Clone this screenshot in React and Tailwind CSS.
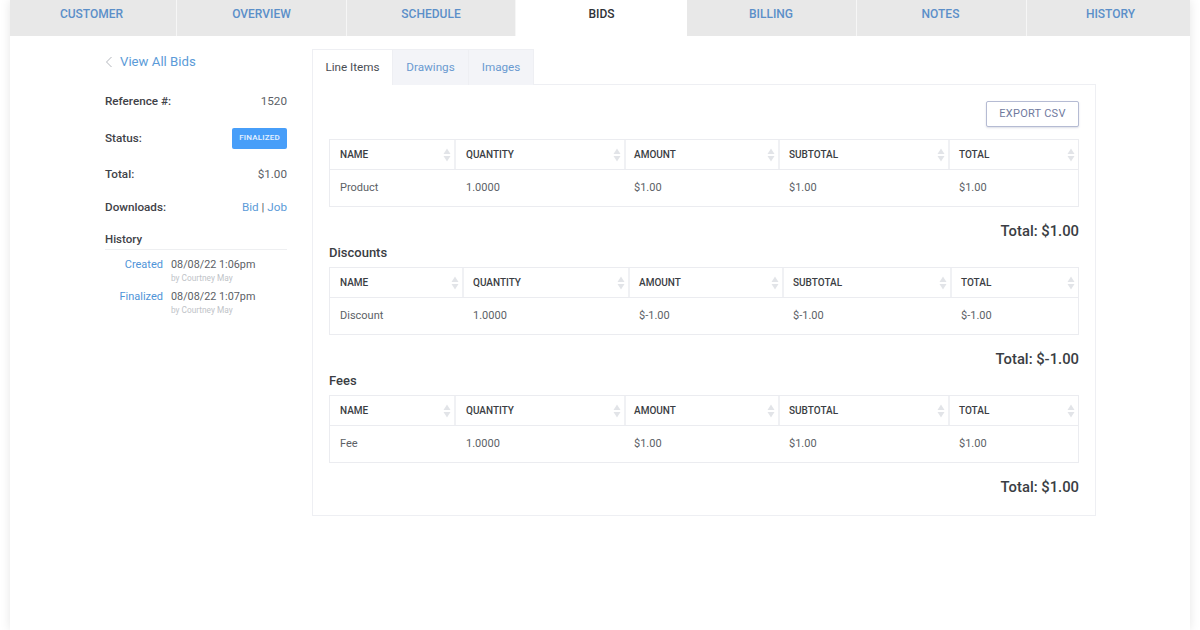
import React from 'react';

const topTabs = [
  { label: 'CUSTOMER', width: 'w-[167px]', extra: 'pr-[3px]' },
  { label: 'OVERVIEW', width: 'w-[170px]' },
  { label: 'SCHEDULE', width: 'w-[169px]' },
  { label: 'BIDS', width: 'w-[171px]', active: true },
  { label: 'BILLING', width: 'w-[170px]', extra: 'pr-[1px]' },
  { label: 'NOTES', width: 'w-[170px]', extra: 'pr-[2px]' },
  { label: 'HISTORY', width: 'w-[163px]', extra: 'pl-[4px]' },
];

const columns = ['NAME', 'QUANTITY', 'AMOUNT', 'SUBTOTAL', 'TOTAL'];

const wideCols = 'grid-cols-[126px_170px_154px_170px_1fr]';
const widePads = ['pl-[10px]', 'pl-[10px]', 'pl-[8px]', 'pl-[9px]', 'pl-[9px]'];
const discountCols = 'grid-cols-[134px_166px_154px_168px_1fr]';
const discountPads = ['pl-[10px]', 'pl-[9px]', 'pl-[9px]', 'pl-[9px]', 'pl-[9px]'];

const SortArrows = () => (
  <svg width="8" height="14" viewBox="0 0 8 14" className="absolute right-[3px] top-[8px]">
    <path d="M4 0.5 L7.5 6 L0.5 6 Z" fill="#e2e4e8" />
    <path d="M4 13.5 L7.5 8 L0.5 8 Z" fill="#e2e4e8" />
  </svg>
);

const ItemTable = ({ cols, pads, row }) => (
  <div className="border border-[#ebecf0]">
    <div className={`grid ${cols} h-[30px] border-b border-[#ebecf0]`}>
      {columns.map((col, i) => (
        <div
          key={col}
          className={`relative flex items-center text-[10px] font-medium text-[#3a3d43] ${pads[i]} ${i < 4 ? 'border-r-2 border-[#f0f1f4]' : ''}`}
        >
          {col}
          <SortArrows />
        </div>
      ))}
    </div>
    <div className={`grid ${cols} h-[36px]`}>
      {row.map((val, i) => (
        <div key={i} className={`flex items-center text-[11px] text-[#5c5f66] ${pads[i]}`}>
          {val}
        </div>
      ))}
    </div>
  </div>
);

const TotalLine = ({ children, className }) => (
  <div className={`text-right text-[14.8px] leading-[20px] font-medium text-[#3a3d43] ${className}`}>{children}</div>
);

const InfoRow = ({ label, children, className }) => (
  <div className={`flex items-center justify-between h-[20px] text-[11.7px] ${className}`}>
    <span className="font-medium text-[#3f4248]">{label}</span>
    {children}
  </div>
);

const HistoryItem = ({ action, date, className }) => (
  <div className={`flex ${className}`}>
    <div className="w-[58px] text-right text-[11px] leading-[14px] text-[#4f94d8]">{action}</div>
    <div className="ml-[8px]">
      <div className="text-[10.8px] leading-[14px] text-[#5c5f66]">{date}</div>
      <div className="text-[8.3px] leading-[12px] text-[#c0c3c8]">by Courtney May</div>
    </div>
  </div>
);

export default function App() {
  return (
    <div className="h-[630px] overflow-hidden bg-white px-[10px] font-['Roboto',sans-serif]">
      <div className="h-full bg-white shadow-[0_0_10px_rgba(0,0,0,0.1)]">
        {/* top tabs */}
        <div className="flex h-[36px] bg-[#e8e8e8]">
          {topTabs.map((tab, i) => (
            <div
              key={tab.label}
              className={`${tab.width} ${tab.extra || ''} flex items-center justify-center text-[12px] font-medium pb-[8px] ${
                tab.active ? 'bg-white text-[#2f3237]' : 'text-[#5b8fc9]'
              } ${i < 6 && !tab.active ? 'border-r border-[#f6f6f6]' : ''}`}
            >
              {tab.label}
            </div>
          ))}
        </div>

        <div className="flex pl-[95px] pt-[13px]">
          {/* left column */}
          <div className="w-[182px] pt-[3px]">
            <div className="flex items-center h-[20px] text-[13.2px] text-[#5b9bd8]">
              <svg width="8" height="12" viewBox="0 0 8 12" className="mr-[7px]">
                <path d="M6.5 1 L1.5 6 L6.5 11" fill="none" stroke="#b4b7bd" strokeWidth="1" />
              </svg>
              View All Bids
            </div>
            <InfoRow label="Reference #:" className="mt-[20px]">
              <span className="text-[#5c5f66]">1520</span>
            </InfoRow>
            <InfoRow label="Status:" className="mt-[17px]">
              <span className="flex items-center justify-center w-[55px] h-[21px] -mt-[2px] rounded-[2px] bg-[#479ef9] text-[8px] font-medium tracking-[0.2px] text-[#e6f2ff]">
                FINALIZED
              </span>
            </InfoRow>
            <InfoRow label="Total:" className="mt-[16px]">
              <span className="text-[#5c5f66]">$1.00</span>
            </InfoRow>
            <InfoRow label="Downloads:" className="mt-[13px]">
              <span className="text-[#5c5f66]">
                <span className="text-[#5b9bd8]">Bid</span> | <span className="text-[#5b9bd8]">Job</span>
              </span>
            </InfoRow>
            <div className="mt-[14px] h-[18px] border-b border-[#eeeff1] text-[11.5px] leading-[14px] font-medium text-[#3f4248]">
              History
            </div>
            <HistoryItem action="Created" date="08/08/22 1:06pm" className="mt-[8px]" />
            <HistoryItem action="Finalized" date="08/08/22 1:07pm" className="mt-[6px]" />
          </div>

          {/* right panel */}
          <div className="ml-[25px] w-[784px]">
            <div className="flex h-[36px] text-[11.7px] relative z-10">
              <div className="flex items-center justify-center w-[81px] bg-white border border-b-0 border-[#eeeff3] text-[#4a4d53]">
                Line Items
              </div>
              <div className="flex items-center justify-center w-[76px] bg-[#f3f4f8] border-t border-r border-[#eeeff3] text-[#6a9ad0]">
                Drawings
              </div>
              <div className="flex items-center justify-center w-[65px] bg-[#f3f4f8] border-t border-r border-[#eeeff3] text-[#6a9ad0]">
                Images
              </div>
            </div>
            <div className="h-[432px] -mt-px border border-[#eeeff3] px-[16px] pt-[16px]">
              <div className="flex justify-end">
                <button className="w-[93px] h-[26px] pt-[1px] rounded-[2px] border border-[#b5bbd3] bg-white text-[11px] tracking-[0.25px] text-[#6f7a9e] shadow-[0_1px_2px_rgba(80,90,130,0.2)]">
                  EXPORT CSV
                </button>
              </div>
              <div className="mt-[12px]">
                <ItemTable cols={wideCols} pads={widePads} row={['Product', '1.0000', '$1.00', '$1.00', '$1.00']} />
              </div>
              <TotalLine className="mt-[14px]">Total: $1.00</TotalLine>
              <div className="mt-[2px] h-[20px] text-[13px] leading-[20px] font-medium text-[#3a3d43]">Discounts</div>
              <div className="mt-[4px]">
                <ItemTable cols={discountCols} pads={discountPads} row={['Discount', '1.0000', '$-1.00', '$-1.00', '$-1.00']} />
              </div>
              <TotalLine className="mt-[14px]">Total: $-1.00</TotalLine>
              <div className="mt-[2px] h-[20px] text-[13px] leading-[20px] font-medium text-[#3a3d43]">Fees</div>
              <div className="mt-[4px]">
                <ItemTable cols={wideCols} pads={widePads} row={['Fee', '1.0000', '$1.00', '$1.00', '$1.00']} />
              </div>
              <TotalLine className="mt-[14px]">Total: $1.00</TotalLine>
            </div>
          </div>
        </div>
      </div>
    </div>
  );
}
